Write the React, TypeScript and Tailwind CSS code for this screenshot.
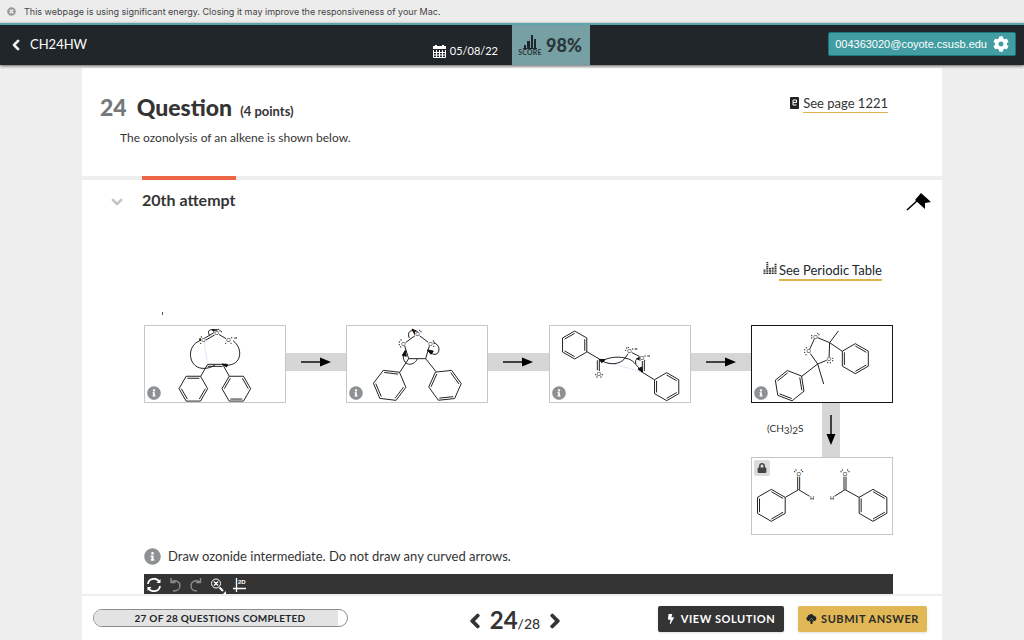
import React from 'react';
import { FaBolt, FaChevronDown, FaChevronLeft, FaChevronRight, FaCog, FaInfoCircle, FaLock, FaTimesCircle } from 'react-icons/fa';

type RingProps = { cx: number; cy: number; r: number; rot: number; parity: number };

// Benzene ring, every second edge gets an inner line
const Ring = ({ cx, cy, r, rot, parity }: RingProps) => {
  const point = (i: number, radius: number) => {
    const angle = ((rot + i * 60) * Math.PI) / 180;
    return [cx + radius * Math.cos(angle), cy + radius * Math.sin(angle)];
  };
  const outer = [0, 1, 2, 3, 4, 5].map((i) => point(i, r).join(',')).join(' ');

  return (
    <>
      <polygon points={outer} />
      {[0, 2, 4].map((i) => {
        const [x1, y1] = point(i + parity, r - 7);
        const [x2, y2] = point(i + parity + 1, r - 7);
        return <line key={i} x1={x1} y1={y1} x2={x2} y2={y2} />;
      })}
    </>
  );
};

type AtomProps = { x: number; y: number; label?: string; dots?: number[][] };

const Atom = ({ x, y, label = 'O', dots = [] }: AtomProps) => (
  <>
    <rect x={x - 7} y={y - 7} width="14" height="14" fill="#fff" stroke="none" />
    <text x={x} y={y + 6} fontSize="17" textAnchor="middle" fill="#111" stroke="none">
      {label}
    </text>
    {dots.map(([dx, dy], i) => (
      <circle key={i} cx={x + dx} cy={y + dy} r="2" fill="#222" stroke="none" />
    ))}
  </>
);

const Molecule = ({ viewBox, title, children }: { viewBox: string; title: string; children: React.ReactNode }) => (
  <svg
    viewBox={viewBox}
    role="img"
    aria-label={title}
    className="block h-full w-full"
    fill="none"
    stroke="#000"
    strokeWidth="2.6"
    fontFamily="Liberation Sans, sans-serif"
  >
    {children}
  </svg>
);

const topPair = [[-12, -6], [-8, -11], [8, -11], [12, -6]];
const leftPair = [[-12, -5], [-12, 3], [-8, 10], [-7, -11]];

const StepOne = () => (
  <Molecule viewBox="15 63 420 228" title="Alkene and ozone">
    <Ring cx={160} cy={251} r={43} rot={0} parity={0} />
    <Ring cx={289} cy={251} r={43} rot={0} parity={1} />
    <path d="M182 214L203 178H248L268 214M203 184H248" />
    <path d="M192 106L202 178" stroke="#c9c9f5" strokeDasharray="4 3" />
    <path d="M195 99L222 83M198 105L225 89M236 88L260 102" />
    <path d="M180 107C140 120 142 185 186 190C205 191 215 186 225 180M279 107C310 130 307 181 258 181" />
    <path d="M208 91C200 76 212 69 228 78" />
    <path d="M178 104L194 99L188 110ZM216 74L232 74L227 84ZM246 177L262 178L260 186Z" fill="#111" />
    <Atom x={190} y={106} dots={[[-10, -5], [-6, -10], [-8, 9]]} />
    <Atom x={230} y={84} dots={[[10, -7], [14, -4], [6, -11]]} />
    <Atom x={265} y={106} dots={[[10, -8], [20, -7], [24, -7], [-8, 9], [8, 9]]} />
  </Molecule>
);

const StepTwo = () => (
  <Molecule viewBox="21 33 420 228" title="Molozonide">
    <Ring cx={149} cy={211} r={49} rot={7} parity={0} />
    <Ring cx={315} cy={211} r={49} rot={-6} parity={1} />
    <path d="M179 172L206 131H257L288 170M206 131L192 86L232 57L270 86L257 131" />
    <path d="M208 69C200 52 212 42 228 49M280 84C300 86 302 112 288 118C278 119 272 114 267 108M190 116C186 154 220 156 232 132" />
    <path d="M216 42L233 50L224 58ZM262 105L280 108L273 118ZM187 121L196 106L199 124Z" fill="#111" />
    <Atom x={190} y={86} dots={leftPair} />
    <Atom x={232} y={57} dots={[[-8, -10], [7, -11], [11, -7]]} />
    <Atom x={271} y={86} dots={[[9, -8], [13, -4], [10, 8]]} />
  </Molecule>
);

const StepThree = () => (
  <Molecule viewBox="12 33 420 228" title="Carbonyl oxide and aldehyde">
    <Ring cx={86} cy={90} r={42} rot={30} parity={1} />
    <Ring cx={362} cy={215} r={42} rot={30} parity={0} />
    <path d="M122 110L160 132V168M154 136V166M325 194L289 172V138M295 168V138" />
    <path d="M165 136L290 172" stroke="#c9c9f5" strokeDasharray="4 3" />
    <path d="M168 138C195 152 222 147 236 131L249 112M172 136C195 124 225 125 240 130C264 134 268 150 284 164M256 112L282 125" />
    <path d="M282 127C270 131 266 138 270 147" />
    <path d="M160 133L177 134L167 143ZM272 131L286 125L283 136ZM276 162L287 156L289 172Z" fill="#111" />
    <Atom x={159} y={177} dots={[[-10, 2], [-6, 9], [6, 9], [10, 2]]} />
    <Atom x={250} y={109} dots={[[-11, -3], [-8, -10], [-3, -12], [10, -7], [18, -7], [22, -7]]} />
    <Atom x={288} y={129} dots={[[9, -6], [18, -6], [22, -6], [8, 7]]} />
  </Molecule>
);

const StepFour = () => (
  <Molecule viewBox="21 33 420 228" title="Ozonide">
    <Ring cx={134} cy={212} r={46} rot={21} parity={1} />
    <Ring cx={331} cy={131} r={45} rot={30} parity={0} />
    <path d="M170 184L218 147L236 207M218 147L191 109L211 65L254 83L280 48M254 83L292 109M254 83L252 133L218 147" />
    <Atom x={211} y={65} dots={[[-11, -3], [-11, 4], [7, -10], [11, -6]]} />
    <Atom x={191} y={109} dots={leftPair} />
    <Atom x={252} y={133} dots={[[-4, 10], [4, 10], [11, -3], [11, 4]]} />
  </Molecule>
);

const Products = () => (
  <Molecule viewBox="21 174 420 228" title="Two benzaldehyde molecules">
    <Ring cx={79} cy={316} r={48} rot={30} parity={0} />
    <Ring cx={384} cy={316} r={48} rot={30} parity={0} />
    <path d="M121 292L161 269L194 289M158 269V230M164 269V230" />
    <path d="M342 292L300 269L268 289M297 269V230M303 269V230" />
    <Atom x={161} y={221} dots={topPair} />
    <Atom x={300} y={221} dots={topPair} />
    <Atom x={201} y={293} label="H" />
    <Atom x={261} y={293} label="H" />
  </Molecule>
);

const InfoButton = () => (
  <button type="button" aria-label="Step information" className="absolute bottom-0.5 left-0.5 text-[#8d9193]">
    <FaInfoCircle className="size-3.5" />
  </button>
);

const Arrow = () => (
  <div className="mb-1 flex h-[18px] flex-1 items-center justify-center bg-[#d6d6d6]">
    <svg viewBox="0 0 30 10" className="h-2.5 w-[30px]">
      <path d="M0 5H22" stroke="#000" strokeWidth="1.4" />
      <path d="M19 0.5L30 5L19 9.5Z" />
    </svg>
  </div>
);

const steps = [
  { name: 'alkene', Drawing: StepOne },
  { name: 'molozonide', Drawing: StepTwo },
  { name: 'fragments', Drawing: StepThree },
  { name: 'ozonide', Drawing: StepFour }
];

const TopBar = () => (
  <>
    <div className="flex h-[23px] shrink-0 items-center gap-2 bg-[#ececec] px-[7px] text-[#444]">
      <button type="button" aria-label="Dismiss" className="text-[#999]">
        <FaTimesCircle className="size-[9px]" />
      </button>
      <p className="font-['Inter',sans-serif] text-[9px]">
        This webpage is using significant energy. Closing it may improve the responsiveness of your Mac.
      </p>
    </div>
    <header className="relative flex h-[42px] shrink-0 border-t-2 border-[#5ba5ab] bg-[#20262a] text-white shadow-[0_1px_3px_rgba(0,0,0,0.6)]">
      <div className="flex w-1/2 items-center justify-between pr-3.5 pl-3">
        <a href="#assignment" className="flex items-center gap-2.5 text-[13px]">
          <FaChevronLeft className="h-3 w-2 overflow-visible stroke-current stroke-40" />
          CH24HW
        </a>
        <div className="flex items-center gap-1 pt-3 text-[11px]">
          <svg viewBox="0 0 13 13" className="size-[13px]" fill="#fff">
            <path d="M2 0h2v1h5V0h2v1h2v3H0V1h2z" />
            <path d="M.5 5v7.5h12V5M.5 7.5h12M.5 10h12M3.5 5v7.5M6.5 5v7.5M9.5 5v7.5" fill="none" stroke="#fff" />
          </svg>
          <time>05/08/22</time>
        </div>
      </div>
      <div className="flex w-[78px] items-center gap-1 bg-[#76a0a4] pl-1.5 text-[#2b363a]">
        <div className="flex w-6 flex-col items-center">
          <svg viewBox="0 0 14 14" className="size-3.5" fill="#20262a">
            <path d="M0 13h14v1H0zM1 10h2v3H1zM4 6h3v7H4zM8 0h2v13H8zM11 4h2v9h-2z" />
          </svg>
          <span className="text-[7px] leading-[7px] font-bold tracking-wide">SCORE</span>
        </div>
        <span className="text-lg leading-5 font-black">98%</span>
      </div>
      <div className="flex flex-1 items-center justify-end pr-2 pb-0.5">
        <button type="button" className="flex h-6 items-center gap-1.5 rounded-xs border border-[#16797d] bg-[#429da2] px-1.5 font-['Liberation_Sans',sans-serif] text-[11px]">
          004363020@coyote.csusb.edu
          <FaCog className="size-4" />
        </button>
      </div>
    </header>
  </>
);

const Toolbar = () => (
  <div className="flex h-8 items-start gap-[7px] bg-[#343434] px-[3px] pt-1">
    <button type="button" aria-label="Reset">
      <svg viewBox="0 0 14 14" className="size-3.5" fill="none" stroke="#fff" strokeWidth="1.8">
        <path d="M1 6C1.5 0 10 -1 12.5 4M13 8C12.5 14 4 15 1.5 10" />
        <path d="M13.5 1V5H9.5ZM.5 13V9H4.5Z" fill="#fff" stroke="none" />
      </svg>
    </button>
    <button type="button" aria-label="Undo">
      <svg viewBox="0 0 14 14" className="size-3.5" fill="none" stroke="#8b8b8b" strokeWidth="1.4">
        <path d="M3 4C8 1 12 4 12 8C12 11 9 13 5 13M3 0V4.5H7.5" />
      </svg>
    </button>
    <button type="button" aria-label="Redo">
      <svg viewBox="0 0 14 14" className="size-3.5" fill="none" stroke="#8b8b8b" strokeWidth="1.4">
        <path d="M11 4C6 1 2 4 2 8C2 11 4 13 8 13M11.5 0V4.5H7" />
      </svg>
    </button>
    <button type="button" aria-label="Zoom">
      <svg viewBox="0 0 16 16" className="size-4" fill="none" stroke="#fff">
        <circle cx="6" cy="5.5" r="4.5" />
        <path d="M4 3.5L8 7.5M8 3.5L4 7.5" strokeWidth="1.4" />
        <path d="M9.5 9.5L13 13" strokeWidth="2" />
        <path d="M16 13V16H13Z" fill="#fff" stroke="none" />
      </svg>
    </button>
    <button type="button" aria-label="Clean up 2D">
      <svg viewBox="0 0 14 14" className="size-3.5" stroke="#fff">
        <path d="M3.5 0V14M0 10.5H13" strokeWidth="1.3" />
        <text x="5" y="6" fontSize="6" fontWeight="bold" fill="#fff" stroke="none" fontFamily="Liberation Sans, sans-serif">
          2D
        </text>
      </svg>
    </button>
  </div>
);

const Scheme = () => (
  <div>
    <div className="flex items-center">
      {steps.map(({ name, Drawing }, index) => (
        <React.Fragment key={name}>
          {index > 0 && <Arrow />}
          <div className={`relative h-[78px] w-[142px] border bg-white ${index === 3 ? 'border-[#15191c]' : 'border-[#c6c6c6]'}`}>
            <Drawing />
            <InfoButton />
          </div>
        </React.Fragment>
      ))}
    </div>
    <div className="ml-auto w-[142px]">
      <div className="flex h-[54px] items-center pl-4">
        <span className="w-[55px] pb-1 text-[10px] text-[#333]">
          (CH<sub className="bottom-[-2px] text-[10px]">3</sub>)<sub className="bottom-[-2px] text-[10px]">2</sub>S
        </span>
        <div className="flex h-full w-[18px] items-center justify-center bg-[#d6d6d6]">
          <svg viewBox="0 0 10 30" className="h-[30px] w-2.5">
            <path d="M5 0V22" stroke="#000" strokeWidth="1.4" />
            <path d="M0.5 19L5 30L9.5 19Z" />
          </svg>
        </div>
      </div>
      <div className="relative h-[78px] border border-[#c6c6c6]">
        <Products />
        <span className="absolute top-0.5 left-0.5 flex size-4 items-center justify-center rounded-xs bg-[#dcdcdc] text-[#444]">
          <FaLock className="size-2.5" />
        </span>
      </div>
    </div>
  </div>
);

const Footer = () => (
  <footer className="relative mx-auto flex h-[46px] w-full max-w-[860px] shrink-0 items-center justify-between border-t-2 border-[#eee] bg-white pr-[15px] pl-[11px]">
    <div className="h-[18px] w-[255px] overflow-hidden rounded-full border border-[#8b8b8b]">
      <div className="flex h-full items-center justify-center bg-[#e3e3e3] text-[10px] font-bold text-[#20262a]" style={{ width: `${(27 / 28) * 100}%` }}>
        <span className="pl-2 tracking-wide">27 OF 28 QUESTIONS COMPLETED</span>
      </div>
    </div>
    <nav aria-label="Questions" className="flex items-center gap-2.5 pt-1.5 pl-6">
      <a href="#previous" aria-label="Previous question">
        <FaChevronLeft className="h-4 w-2.5 overflow-visible stroke-current stroke-40" />
      </a>
      <p className="text-2xl leading-6 font-bold">
        24<span className="text-sm font-medium">/28</span>
      </p>
      <a href="#next" aria-label="Next question">
        <FaChevronRight className="h-4 w-2.5 overflow-visible stroke-current stroke-40" />
      </a>
    </nav>
    <div className="flex gap-3.5 pt-0.5">
      <button type="button" className="flex h-[26px] w-[126px] items-center justify-center gap-1.5 rounded-xs bg-[#343434] text-[11px] font-bold tracking-wider whitespace-nowrap text-white shadow">
        <FaBolt className="h-2.5 w-2" />
        VIEW SOLUTION
      </button>
      <button type="submit" className="flex h-[26px] w-[129px] items-center justify-center gap-1 rounded-xs bg-[#e2b755] text-[11px] font-bold tracking-wider whitespace-nowrap text-[#2b2b2b] shadow">
        <svg viewBox="0 0 11 10" className="h-2.5 w-[11px]" fill="#20262a">
          <path d="M2.5 7A2.3 2.3 0 0 1 1.5 2.8A3.5 3.5 0 0 1 8 2A2.6 2.6 0 0 1 8.8 7H8L5.5 4L3 7Z" />
          <path d="M5.5 4.5L8 7.5H6.5V10H4.5V7.5H3Z" />
        </svg>
        SUBMIT ANSWER
      </button>
    </div>
  </footer>
);

const App = () => {
  return (
    <div className="flex h-screen flex-col overflow-hidden bg-[#eee] font-['Lato',sans-serif] text-[#343434]">
      <TopBar />

      <main className="min-h-0 flex-1 overflow-hidden pt-[3px]">
        <div className="mx-auto w-full max-w-[860px]">
          <section className="flex h-[108px] justify-between bg-white pt-6 pr-[54px] pl-[18px]">
            <div>
              <h1 className="flex items-baseline text-[23px] leading-[30px] font-black">
                <span className="mr-2.5 text-[#74797b]">24</span>
                Question
                <span className="ml-2 text-[13px] font-bold">(4 points)</span>
              </h1>
              <p className="mt-1 pl-5 text-xs">The ozonolysis of an alkene is shown below.</p>
            </div>
            <div className="flex items-start gap-1 pt-0.5 text-[13px]">
              <svg viewBox="0 0 9 12" className="mt-[3px] h-3 w-[9px]">
                <rect width="9" height="12" rx="1" fill="#222" />
                <path d="M3 5.5H6.5V3H3V8H6.5" fill="none" stroke="#fff" />
              </svg>
              <a href="#page-1221" className="border-b border-[#e0b44c] leading-[18px]">
                See page 1221
              </a>
            </div>
          </section>

          <section className="mt-1 bg-white">
            <div className="flex items-start justify-between pr-2.5 pl-7">
              <div className="flex items-start gap-[18px]">
                <button type="button" aria-label="Collapse attempt" className="mt-4 text-[#c2c2c2]">
                  <FaChevronDown className="h-3 w-3.5 stroke-current stroke-40" />
                </button>
                <h2 className="-mt-1 border-t-4 border-[#ec6547] pt-2.5 text-base leading-5 font-bold">20th attempt</h2>
              </div>
              <button type="button" aria-label="Pin" className="mt-3">
                <svg viewBox="0 0 26 19" className="h-[19px] w-[26px]">
                  <path d="M1 18L12 8" stroke="#000" strokeWidth="1.6" />
                  <path d="M15 1L25 10L19 11V17L9 8Z" />
                </svg>
              </button>
            </div>

            <div className="mt-[50px] flex items-start justify-end gap-0.5 pr-[60px] text-[13px] text-[#20262a]">
              <svg viewBox="0 0 14 13" className="h-[13px] w-3.5" stroke="#333" strokeWidth="2" strokeDasharray="1.5 0.7">
                <path d="M1.5 13V8M4.3 13V1M7 13V7M9.7 13V6M12.5 13V2" />
              </svg>
              <a href="#periodic-table" className="border-b-2 border-[#e0b44c] leading-[18px]">
                See Periodic Table
              </a>
            </div>

            <div className="pt-[31px] pr-[49px] pl-[62px]">
              <div className="mb-2.5 ml-[18px] h-[3px] w-px bg-[#555]"></div>
              <Scheme />
              <div className="flex h-[39px] items-center gap-[7px] pt-1 text-[13px]">
                <FaInfoCircle className="size-[17px] text-[#8d9193]" />
                <p>Draw ozonide intermediate. Do not draw any curved arrows.</p>
              </div>
              <Toolbar />
            </div>
          </section>
        </div>
      </main>

      <Footer />
    </div>
  );
};

export default App;
